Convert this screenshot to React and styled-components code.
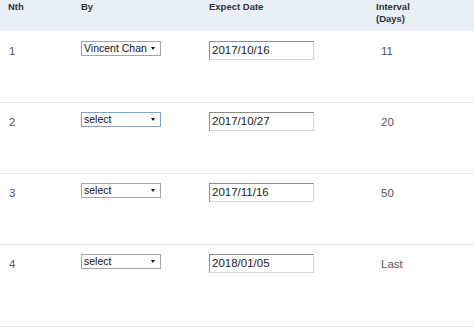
import React from 'react';
import styled, { createGlobalStyle } from 'styled-components';

const GlobalStyle = createGlobalStyle`
    body {
        margin: 0;
        background: #fff;
        font-family: "Liberation Sans", Arial, sans-serif;
    }
`;

const rows = [
    { nth: 1, by: 'Vincent Chan', date: '2017/10/16', interval: '11' },
    { nth: 2, by: 'select', date: '2017/10/27', interval: '20', focused: true },
    { nth: 3, by: 'select', date: '2017/11/16', interval: '50' },
    { nth: 4, by: 'select', date: '2018/01/05', interval: 'Last' },
];

export default function App() {
    return (
        <>
            <GlobalStyle />
            <Table>
                <HeadRow>
                    <HeadCell>Nth</HeadCell>
                    <HeadCell>By</HeadCell>
                    <HeadCell>Expect Date</HeadCell>
                    <HeadCell>Interval<br />(Days)</HeadCell>
                </HeadRow>
                {rows.map((r, i) => (
                    <Row key={r.nth} $first={i === 0} $last={i === rows.length - 1}>
                        <Cell>{r.nth}</Cell>
                        <div>
                            <Select $focused={r.focused}>
                                {r.by}
                                <Arrow />
                            </Select>
                        </div>
                        <div>
                            <DateInput defaultValue={r.date} />
                        </div>
                        <Cell $value>{r.interval}</Cell>
                    </Row>
                ))}
            </Table>
        </>
    );
}

const Table = styled.div`
    width: 474px;
`;

const grid = `
    display: grid;
    grid-template-columns: 81px 128px 167px 1fr;
`;

const HeadRow = styled.div`
    ${grid}
    height: 31px;
    background: #e8eff7;
    box-sizing: border-box;
    padding-top: 1px;
`;

const HeadCell = styled.div`
    font-size: 9.5px;
    font-weight: 700;
    line-height: 12px;
    color: #333;
    &:first-child {
        padding-left: 8px;
    }
`;

const Row = styled.div`
    ${grid}
    align-items: start;
    box-sizing: border-box;
    height: ${p => (p.$last ? 82 : p.$first ? 72 : 71)}px;
    padding-top: ${p => (p.$first ? 9 : 8)}px;
    border-bottom: 1px solid #e9e9e9;
`;

const Cell = styled.div`
    margin-top: 2px;
    font-size: 11.5px;
    line-height: 19px;
    color: #555;
    padding-left: ${p => (p.$value ? 5 : 9)}px;
`;

const Select = styled.div`
    position: relative;
    box-sizing: border-box;
    width: 80px;
    height: 15px;
    margin-top: 1px;
    padding-left: 2px;
    border: 1px solid ${p => (p.$focused ? '#7da2ce' : '#a6a6a6')};
    background: #fff;
    font-size: 10.5px;
    line-height: 13px;
    color: #111;
    white-space: nowrap;
`;

const Arrow = styled.span`
    position: absolute;
    right: 5px;
    top: 5px;
    width: 0;
    height: 0;
    border-left: 2px solid transparent;
    border-right: 2px solid transparent;
    border-top: 3px solid #111;
`;

const DateInput = styled.input`
    box-sizing: border-box;
    width: 105px;
    height: 19px;
    margin: 0;
    padding: 0 2px;
    border: 1px solid #d6d6d6;
    border-top-color: #8d8d8d;
    border-left-color: #8d8d8d;
    font-family: "Liberation Sans", Arial, sans-serif;
    font-size: 11.5px;
    color: #222;
    outline: none;
`;
